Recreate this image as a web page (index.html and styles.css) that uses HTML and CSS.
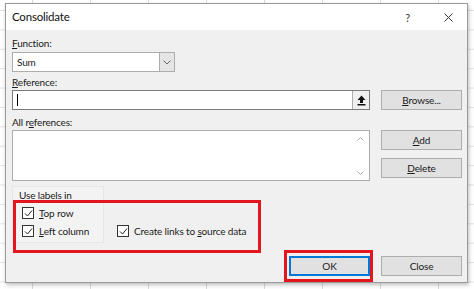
FILE: index.html
```html
<!DOCTYPE html>
<html>
<head>
<meta charset="utf-8">
<link rel="stylesheet" href="styles.css">
</head>
<body>
<div class="dialog">
  <div class="titlebar">
    <span class="title">Consolidate</span>
    <span class="help">?</span>
    <svg class="close-x" width="9" height="9" viewBox="0 0 9 9"><path d="M0.5 0.5 L8.5 8.5 M8.5 0.5 L0.5 8.5" stroke="#333" stroke-width="1" fill="none"/></svg>
  </div>
  <div class="content">
    <div class="label"><u>F</u>unction:</div>
    <div class="combo">
      <span class="combo-text">Sum</span>
      <span class="combo-btn">
        <svg width="8" height="5" viewBox="0 0 8 5"><path d="M0.5 0.5 L4 4 L7.5 0.5" stroke="#666" stroke-width="1" fill="none"/></svg>
      </span>
    </div>
    <div class="label l-ref"><u>R</u>eference:</div>
    <div class="row">
      <div class="input">
        <span class="caret"></span>
        <span class="upload">
          <svg width="9" height="11" viewBox="0 0 9 11"><path d="M4.5 0.5 L8.5 5 L6 5 L6 8 L3 8 L3 5 L0.5 5 Z" fill="#111"/><rect x="0.5" y="9" width="8" height="1.5" fill="#111"/></svg>
        </span>
      </div>
      <div class="btn"><u>B</u>rowse...</div>
    </div>
    <div class="label l-all">All r<u>e</u>ferences:</div>
    <div class="row">
      <div class="listbox">
        <span class="scroll">
          <svg width="7" height="4" viewBox="0 0 7 4"><path d="M0.5 3.5 L3.5 0.5 L6.5 3.5" stroke="#aaa" fill="none"/></svg>
          <svg width="7" height="4" viewBox="0 0 7 4"><path d="M0.5 0.5 L3.5 3.5 L6.5 0.5" stroke="#aaa" fill="none"/></svg>
        </span>
      </div>
      <div class="btn-col">
        <div class="btn"><u>A</u>dd</div>
        <div class="btn"><u>D</u>elete</div>
      </div>
    </div>
    <div class="bottom">
      <div class="group">
        <div class="group-label">Use labels in</div>
        <div class="check-row"><span class="cb"><svg width="9" height="9" viewBox="0 0 9 9"><path d="M1 4.5 L3.5 7 L8 1.5" stroke="#222" stroke-width="1" fill="none"/></svg></span><span><u>T</u>op row</span></div>
        <div class="check-row"><span class="cb"><svg width="9" height="9" viewBox="0 0 9 9"><path d="M1 4.5 L3.5 7 L8 1.5" stroke="#222" stroke-width="1" fill="none"/></svg></span><span><u>L</u>eft column</span></div>
      </div>
      <div class="check-row links"><span class="cb"><svg width="9" height="9" viewBox="0 0 9 9"><path d="M1 4.5 L3.5 7 L8 1.5" stroke="#222" stroke-width="1" fill="none"/></svg></span><span>Create links to <u>s</u>ource data</span></div>
    </div>
    <div class="actions">
      <div class="btn ok">OK</div>
      <div class="btn">Close</div>
    </div>
  </div>
  <div class="mark mark-labels"></div>
  <div class="mark mark-ok"></div>
</div>
</body>
</html>
```

FILE: styles.css
```css
html, body {
  margin: 0;
  padding: 0;
}
body {
  width: 474px;
  height: 289px;
  overflow: hidden;
  background-color: #ffffff;
  background-image:
    linear-gradient(to right, #dadada 1px, transparent 1px),
    linear-gradient(to bottom, #e2e2e2 1px, transparent 1px);
  background-size: 58px 100%, 100% 19.4px;
  background-position: 32px 0, 0 10px;
  font-family: "Lato", "Noto Sans", sans-serif;
  font-size: 10px;
  letter-spacing: -0.15px;
  color: #1a1a1a;
  padding: 3px 0 0 5px;
  box-sizing: border-box;
}
u { text-decoration: underline; text-underline-offset: 1px; }
.dialog {
  position: relative;
  width: 463px;
  height: 280px;
  box-sizing: border-box;
  border: 1px solid #9a9a9a;
  background: #f0f0f0;
  box-shadow: 1px 2px 4px rgba(0,0,0,0.25);
  display: flex;
  flex-direction: column;
}
.titlebar {
  height: 26px;
  background: #ffffff;
  display: flex;
  align-items: center;
  padding: 0 14px 0 6px;
  flex: none;
}
.title {
  font-size: 11.5px;
  letter-spacing: -0.2px;
  color: #111;
  flex: 1;
  margin-top: -1px;
}
.help {
  font-size: 11px;
  color: #333;
  margin-right: 34px;
}
.close-x { display: block; }
.content {
  padding: 6px 5px 0 6px;
  display: flex;
  flex-direction: column;
}
.label {
  height: 14px;
  line-height: 14px;
}
.l-ref { margin-top: 3px; }
.l-all { margin-top: 5px; }
.combo {
  margin-top: 2px;
  width: 163px;
  height: 20px;
  box-sizing: border-box;
  border: 1px solid #adadad;
  background: #fff;
  display: flex;
  align-items: center;
}
.combo-text { flex: 1; padding-left: 4px; }
.combo-btn {
  width: 16px;
  height: 20px;
  margin: -1px -1px -1px 0;
  box-sizing: border-box;
  border: 1px solid #adadad;
  background: #e5e5e5;
  display: flex;
  align-items: center;
  justify-content: center;
}
.row {
  display: flex;
  margin-top: 1px;
  gap: 11px;
}
.input {
  width: 358px;
  height: 20px;
  box-sizing: border-box;
  border: 1px solid #7a7a7a;
  background: #fff;
  display: flex;
  align-items: center;
}
.caret {
  width: 1px;
  height: 12px;
  background: #000;
  margin-left: 4px;
  flex: 1;
  max-width: 1px;
  margin-right: auto;
}
.upload {
  width: 17px;
  height: 18px;
  box-sizing: border-box;
  border-left: 1px solid #adadad;
  background: #f0f0f0;
  display: flex;
  align-items: center;
  justify-content: center;
}
.btn {
  width: 81px;
  height: 20px;
  box-sizing: border-box;
  border: 1px solid #adadad;
  background: #e1e1e1;
  display: flex;
  align-items: center;
  justify-content: center;
}
.listbox {
  width: 358px;
  height: 51px;
  box-sizing: border-box;
  border: 1px solid #adadad;
  background: #fff;
  display: flex;
  justify-content: flex-end;
}
.scroll {
  width: 17px;
  display: flex;
  flex-direction: column;
  justify-content: space-between;
  align-items: center;
  padding: 6px 0 5px;
}
.scroll svg { display: block; }
.btn-col {
  display: flex;
  flex-direction: column;
  gap: 8px;
}
.bottom {
  display: flex;
  margin-top: 5px;
}
.group {
  width: 92px;
  height: 57px;
  box-sizing: border-box;
  border: 1px solid #e6e6e6;
  background: #f3f3f3;
  padding: 0 0 0 9px;
}
.group-label {
  height: 14px;
  line-height: 14px;
  margin-left: -3px;
  margin-top: 1px;
}
.check-row {
  display: flex;
  align-items: center;
  height: 12px;
  gap: 5px;
}
.group .check-row { margin-top: 5px; }
.group .check-row + .check-row { margin-top: 6px; }
.links {
  align-self: flex-end;
  margin-left: 13px;
  margin-bottom: 6px;
}
.cb {
  width: 12px;
  height: 12px;
  box-sizing: border-box;
  border: 1px solid #333;
  background: #fff;
  display: flex;
  align-items: center;
  justify-content: center;
  flex: none;
}
.cb svg { display: block; }
.actions {
  display: flex;
  justify-content: flex-end;
  gap: 11px;
  margin-top: 13px;
  padding-right: 0;
}
.btn.ok {
  border: 1px solid #0078d7;
  box-shadow: inset 0 0 0 1px #0078d7;
}
.mark {
  position: absolute;
  border: 3px solid #e3151f;
  box-sizing: border-box;
}
.mark-labels {
  left: 7px;
  top: 196px;
  width: 248px;
  height: 53px;
}
.mark-ok {
  left: 278px;
  top: 246px;
  width: 89px;
  height: 32px;
}
```
